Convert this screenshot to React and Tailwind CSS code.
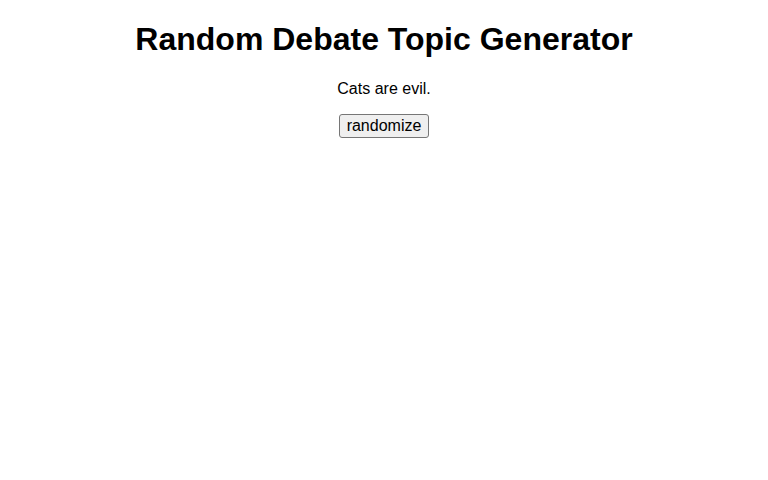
export default function App() {
  return (
    <div className="bg-white text-black text-center" style={{ fontFamily: '"Liberation Sans", Arial, sans-serif' }}>
      <h1 className="text-[32px] font-bold leading-[normal] pt-[21.44px] mb-[21.44px]">Random Debate Topic Generator</h1>
      <p className="text-base leading-[normal] mb-4">Cats are evil.</p>
      <button className="text-base leading-[normal] bg-[#efefef] border border-[#767676] rounded-[3px] px-[7px] py-[2px] text-black">
        randomize
      </button>
    </div>
  );
}
